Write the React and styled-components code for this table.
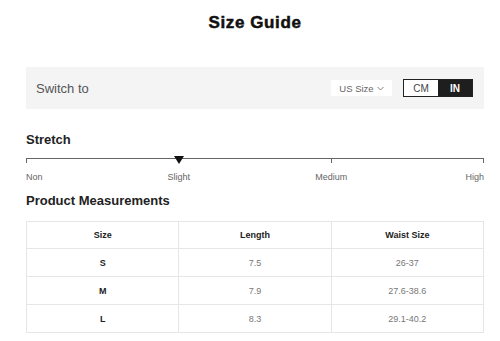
import React from "react";
import styled, { createGlobalStyle } from "styled-components";

const GlobalStyle = createGlobalStyle`
  * { box-sizing: border-box; }
  body {
    margin: 0;
    background: #fff;
    font-family: "Liberation Sans", Arial, sans-serif;
  }
`;

const rows = [
  { size: "S", length: "7.5", waist: "26-37" },
  { size: "M", length: "7.9", waist: "27.6-38.6" },
  { size: "L", length: "8.3", waist: "29.1-40.2" },
];

export default function App() {
  return (
    <>
      <GlobalStyle />
      <Page>
        <Title>Size Guide</Title>

        <SwitchBar>
          <span>Switch to</span>
          <Controls>
            <Dropdown>
              US Size
              <svg width="7" height="5" viewBox="0 0 7 5">
                <path d="M0.5 1 L3.5 4 L6.5 1" fill="none" stroke="#777" strokeWidth="0.9" />
              </svg>
            </Dropdown>
            <Toggle>
              <ToggleOption>CM</ToggleOption>
              <ToggleOption active>IN</ToggleOption>
            </Toggle>
          </Controls>
        </SwitchBar>

        <SectionTitle>Stretch</SectionTitle>
        <Scale>
          <Track>
            <Segment />
            <Segment />
            <Segment last />
            <Marker />
          </Track>
          <Labels>
            <Label align="left" span="1 / 2">Non</Label>
            <Label span="2 / 4">Slight</Label>
            <Label span="4 / 6">Medium</Label>
            <Label align="right" span="6 / 7">High</Label>
          </Labels>
        </Scale>

        <SectionTitle second>Product Measurements</SectionTitle>
        <Table>
          <thead>
            <tr>
              <Th>Size</Th>
              <Th>Length</Th>
              <Th>Waist Size</Th>
            </tr>
          </thead>
          <tbody>
            {rows.map((r) => (
              <tr key={r.size}>
                <Td bold>{r.size}</Td>
                <Td>{r.length}</Td>
                <Td>{r.waist}</Td>
              </tr>
            ))}
          </tbody>
        </Table>
      </Page>
    </>
  );
}

const Page = styled.div`
  width: 500px;
  padding: 0 16px 0 26px;
`;

const Title = styled.h1`
  margin: 0;
  padding-top: 12px;
  text-align: center;
  font-size: 17px;
  line-height: 22px;
  font-weight: 700;
  letter-spacing: 0.6px;
  -webkit-text-stroke: 0.5px #111;
  color: #111;
`;

const SwitchBar = styled.div`
  margin-top: 33px;
  height: 42px;
  background: #f4f4f4;
  display: flex;
  align-items: center;
  justify-content: space-between;
  padding: 0 11px 0 10px;
  font-size: 13px;
  color: #555;
`;

const Controls = styled.div`
  display: flex;
  align-items: center;
  gap: 11px;
`;

const Dropdown = styled.div`
  width: 61px;
  height: 16px;
  background: #fff;
  display: flex;
  align-items: center;
  justify-content: center;
  gap: 3px;
  font-size: 9.5px;
  color: #666;

  svg {
    margin-top: 1px;
  }
`;

const Toggle = styled.div`
  display: flex;
  border: 1px solid #222;
  height: 18px;
`;

const ToggleOption = styled.div`
  width: 34px;
  display: flex;
  align-items: center;
  justify-content: center;
  font-size: 10px;
  font-weight: ${(p) => (p.active ? 700 : 400)};
  background: ${(p) => (p.active ? "#1e1e1e" : "#fff")};
  color: ${(p) => (p.active ? "#fff" : "#444")};
`;

const SectionTitle = styled.h2`
  margin: 0;
  margin-top: ${(p) => (p.second ? "10px" : "22px")};
  font-size: 13px;
  line-height: 18px;
  font-weight: 700;
  color: #222;
`;

const Scale = styled.div`
  margin-top: 9px;
`;

const Track = styled.div`
  position: relative;
  display: grid;
  grid-template-columns: 1fr 1fr 1fr;
  height: 5px;
`;

const Segment = styled.div`
  border-top: 1px solid #666;
  border-left: 1px solid #666;
  border-right: ${(p) => (p.last ? "1px solid #666" : "none")};

  &:nth-child(2) {
    border-left: none;
  }
`;

const Marker = styled.div`
  position: absolute;
  left: calc(33.33% - 5px);
  top: -2px;
  width: 0;
  height: 0;
  border-left: 5px solid transparent;
  border-right: 5px solid transparent;
  border-top: 8px solid #111;
`;

const Labels = styled.div`
  display: grid;
  grid-template-columns: repeat(6, 1fr);
  margin-top: 9px;
  font-size: 9px;
  color: #666;
`;

const Label = styled.span`
  grid-column: ${(p) => p.span};
  text-align: ${(p) => p.align || "center"};
`;

const Table = styled.table`
  margin-top: 11px;
  width: 100%;
  border-collapse: collapse;
  table-layout: fixed;
  font-size: 9px;
`;

const Th = styled.th`
  border: 1px solid #e6e6e6;
  height: 27px;
  font-weight: 700;
  color: #222;
`;

const Td = styled.td`
  border: 1px solid #e6e6e6;
  height: 28px;
  text-align: center;
  font-weight: ${(p) => (p.bold ? 700 : 400)};
  color: ${(p) => (p.bold ? "#222" : "#777")};
`;
